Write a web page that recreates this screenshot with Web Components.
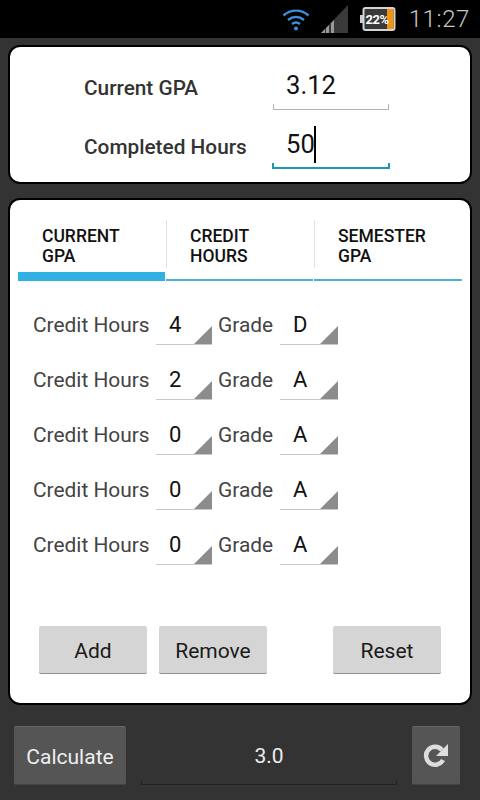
<!DOCTYPE html>
<html>
<head>
<meta charset="utf-8">
<style>
  html, body { margin: 0; padding: 0; height: 100%; }
  body { width: 480px; height: 800px; overflow: hidden; background: #333; font-family: Roboto, sans-serif; display: flex; flex-direction: column; }
</style>
</head>
<body>
<status-bar></status-bar>
<gpa-card style="margin-top:7px">
  <gpa-field label="Current GPA" value="3.12"></gpa-field>
  <gpa-field label="Completed Hours" value="50" focused></gpa-field>
</gpa-card>
<calc-panel>
  <tab-strip slot="tabs">
    <tab-item active>CURRENT<br>GPA</tab-item>
    <tab-item>CREDIT<br>HOURS</tab-item>
    <tab-item style="width:148px">SEMESTER<br>GPA</tab-item>
  </tab-strip>
  <course-row hours="4" grade="D"></course-row>
  <course-row hours="2" grade="A"></course-row>
  <course-row hours="0" grade="A"></course-row>
  <course-row hours="0" grade="A"></course-row>
  <course-row hours="0" grade="A"></course-row>
  <action-button slot="actions">Add</action-button>
  <action-button slot="actions" style="margin-left:12px">Remove</action-button>
  <action-button slot="actions" style="margin-left:66px">Reset</action-button>
</calc-panel>
<result-bar value="3.0"></result-bar>

<script>
class StatusBar extends HTMLElement {
  connectedCallback() {
    this.attachShadow({ mode: 'open' }).innerHTML = `
      <style>
        :host { display: flex; align-items: center; height: 38px; background: #000; box-sizing: border-box; padding: 0 10px 0 282px; flex: none; }
        svg { display: block; flex: none; }
        .signal { margin-left: 11px; }
        .batt { position: relative; margin-left: 11px; width: 36px; height: 26px; flex: none; }
        .batt span { position: absolute; left: 5px; top: 4px; width: 24px; text-align: center; font: 700 13px/20px Roboto, sans-serif; letter-spacing: -0.5px; color: #fff; }
        .clock { margin-left: auto; font: 300 24px/38px Roboto, sans-serif; color: #c9c9c9; letter-spacing: 0.6px; }
      </style>
      <svg width="28" height="24" viewBox="0 0 28 24" fill="none" stroke="#3d8fdc" stroke-width="2.4">
        <path d="M1.5 8.5C8.5 2 19.5 2 26.5 8.5"/>
        <path d="M6 13C11 8.8 17 8.8 22 13"/>
        <path d="M10 17C12.5 15 15.5 15 18 17"/>
        <circle cx="14" cy="21.5" r="2" fill="#3d8fdc" stroke="none"/>
      </svg>
      <svg class="signal" width="28" height="30" viewBox="0 0 28 30">
        <path d="M0 29L27 1V29Z" fill="#3a3a3a"/>
        <path d="M0 29L4 25V29ZM5 29V24L8 21V29ZM10 29V19L13 16V29Z" fill="#9a9a9a"/>
      </svg>
      <div class="batt">
        <svg width="36" height="26" viewBox="0 0 36 26">
          <rect x="0" y="9" width="3" height="8" fill="#ccc"/>
          <rect x="3.5" y="2" width="31" height="22" rx="2" fill="#3a3a3a" stroke="#d4d4d4" stroke-width="2"/>
          <rect x="27" y="3" width="6.5" height="20" fill="#ef9416"/>
        </svg>
        <span>22%</span>
      </div>
      <div class="clock">11:27</div>`;
  }
}

class GpaCard extends HTMLElement {
  connectedCallback() {
    this.attachShadow({ mode: 'open' }).innerHTML = `
      <style>
        :host { display: flex; flex-direction: column; flex: none; height: 139px; margin: 0 8px; box-sizing: border-box; padding: 11px 0 0 74px; background: #fff; border: 2px solid #000; border-radius: 12px; }
      </style>
      <slot></slot>`;
  }
}

class GpaField extends HTMLElement {
  connectedCallback() {
    const focused = this.hasAttribute('focused');
    this.attachShadow({ mode: 'open' }).innerHTML = `
      <style>
        :host { display: flex; align-items: center; height: 59px; }
        .label { width: 189px; flex: none; font: 500 20.8px Roboto, sans-serif; color: #333; }
        .input { position: relative; box-sizing: border-box; width: 116px; height: 46px; margin-top: -1px; padding-left: 13px; font: 400 25.6px/42px Roboto, sans-serif; color: #111; display: flex; }
        .input::after { content: ''; position: absolute; left: 0; right: 0; bottom: 0; height: 6px; box-sizing: border-box; border: 1px solid #b3b3b3; border-top: 0; }
        :host([focused]) .input::after { border: 2px solid #2196b4; border-top: 0; left: -1px; right: -1px; }
        .caret { width: 2.5px; height: 37px; margin: 3px 0 0 -1px; background: #000; }
      </style>
      <div class="label">${this.getAttribute('label')}</div>
      <div class="input"><span>${this.getAttribute('value')}</span>${focused ? '<i class="caret"></i>' : ''}</div>`;
  }
}

class CalcPanel extends HTMLElement {
  connectedCallback() {
    this.attachShadow({ mode: 'open' }).innerHTML = `
      <style>
        :host { display: flex; flex-direction: column; flex: none; height: 507px; margin: 14px 8px 0; box-sizing: border-box; padding: 20px 8px 0; background: #fff; border: 2px solid #000; border-radius: 12px; }
        .rows { display: flex; flex-direction: column; margin-top: 22px; padding-left: 15px; height: 323px; }
        .actions { display: flex; padding-left: 21px; }
      </style>
      <slot name="tabs"></slot>
      <div class="rows"><slot></slot></div>
      <div class="actions"><slot name="actions"></slot></div>`;
  }
}

class TabStrip extends HTMLElement {
  connectedCallback() {
    this.attachShadow({ mode: 'open' }).innerHTML = `
      <style>
        :host { display: flex; gap: 1px; height: 61px; flex: none; }
      </style>
      <slot></slot>`;
  }
}

class TabItem extends HTMLElement {
  connectedCallback() {
    this.attachShadow({ mode: 'open' }).innerHTML = `
      <style>
        :host { display: block; position: relative; box-sizing: border-box; width: 147px; height: 61px; padding: 6px 0 0 24px; font: 500 17.5px/20px Roboto, sans-serif; color: #111; border-bottom: 2px solid #4fb0d2; }
        :host([active]) { border-bottom: 9px solid #2fb1e3; }
        :host(:not(:last-child))::after { content: ''; position: absolute; right: -2px; top: 0; height: 48px; width: 1px; background: #e2e2e2; }
      </style>
      <slot></slot>`;
  }
}

class SpinSelect extends HTMLElement {
  connectedCallback() {
    this.attachShadow({ mode: 'open' }).innerHTML = `
      <style>
        :host { display: block; position: relative; box-sizing: border-box; height: 42px; padding: 7px 0 0 13px; font: 400 22px/30px Roboto, sans-serif; color: #111; border-bottom: 1px solid #c8c8c8; }
        .arrow { position: absolute; right: 0; bottom: 0; width: 0; height: 0; border-style: solid; border-width: 0 0 18px 18px; border-color: transparent transparent #8c8c8c transparent; }
      </style>
      <slot></slot><i class="arrow"></i>`;
  }
}

class CourseRow extends HTMLElement {
  connectedCallback() {
    this.attachShadow({ mode: 'open' }).innerHTML = `
      <style>
        :host { display: flex; align-items: flex-start; height: 55px; font: 400 20.9px/30px Roboto, sans-serif; color: #444; }
        .hours, .grade { padding-top: 7px; flex: none; }
        .hours { width: 123px; }
        .grade { width: 62px; }
        spin-select { flex: none; }
        .a { width: 56px; margin-right: 6px; }
        .b { width: 58px; }
      </style>
      <div class="hours">Credit Hours</div>
      <spin-select class="a">${this.getAttribute('hours')}</spin-select>
      <div class="grade">Grade</div>
      <spin-select class="b">${this.getAttribute('grade')}</spin-select>`;
  }
}

class ActionButton extends HTMLElement {
  connectedCallback() {
    this.attachShadow({ mode: 'open' }).innerHTML = `
      <style>
        :host { display: flex; align-items: center; justify-content: center; box-sizing: border-box; width: 108px; height: 48px; padding-top: 2px; flex: none; background: #d5d5d5; border-bottom: 1px solid #8f8f8f; border-radius: 2px; font: 400 21px Roboto, sans-serif; color: #1a1a1a; }
      </style>
      <slot></slot>`;
  }
}

class ResultBar extends HTMLElement {
  connectedCallback() {
    this.attachShadow({ mode: 'open' }).innerHTML = `
      <style>
        :host { display: flex; align-items: flex-start; flex: none; padding: 21px 20px 0 14px; }
        button { all: unset; display: flex; align-items: center; justify-content: center; box-sizing: border-box; height: 59px; background: #555; border-radius: 2px; font: 400 21px Roboto, sans-serif; color: #eee; border-top: 1px solid #666; border-bottom: 1px solid #444; }
        .calc { width: 112px; padding-top: 2px; }
        .output { position: relative; box-sizing: border-box; width: 256px; height: 59px; margin: 0 15px; display: flex; align-items: center; justify-content: center; font: 400 21px Roboto, sans-serif; color: #eee; }
        .output::after { content: ''; position: absolute; left: 0; right: 0; bottom: 0; height: 5px; box-sizing: border-box; border: 1px solid #222; border-top: 0; }
        .refresh { width: 48px; }
      </style>
      <button class="calc">Calculate</button>
      <div class="output">${this.getAttribute('value')}</div>
      <button class="refresh">
        <svg width="26" height="26" viewBox="0 0 26 26" fill="none">
          <path d="M20 17A9 9 0 1 1 19 7" stroke="#ddd" stroke-width="4.5"/>
          <path d="M25 1V13H13Z" fill="#ddd"/>
        </svg>
      </button>`;
  }
}

customElements.define('status-bar', StatusBar);
customElements.define('gpa-card', GpaCard);
customElements.define('gpa-field', GpaField);
customElements.define('calc-panel', CalcPanel);
customElements.define('tab-strip', TabStrip);
customElements.define('tab-item', TabItem);
customElements.define('spin-select', SpinSelect);
customElements.define('course-row', CourseRow);
customElements.define('action-button', ActionButton);
customElements.define('result-bar', ResultBar);
</script>
</body>
</html>
